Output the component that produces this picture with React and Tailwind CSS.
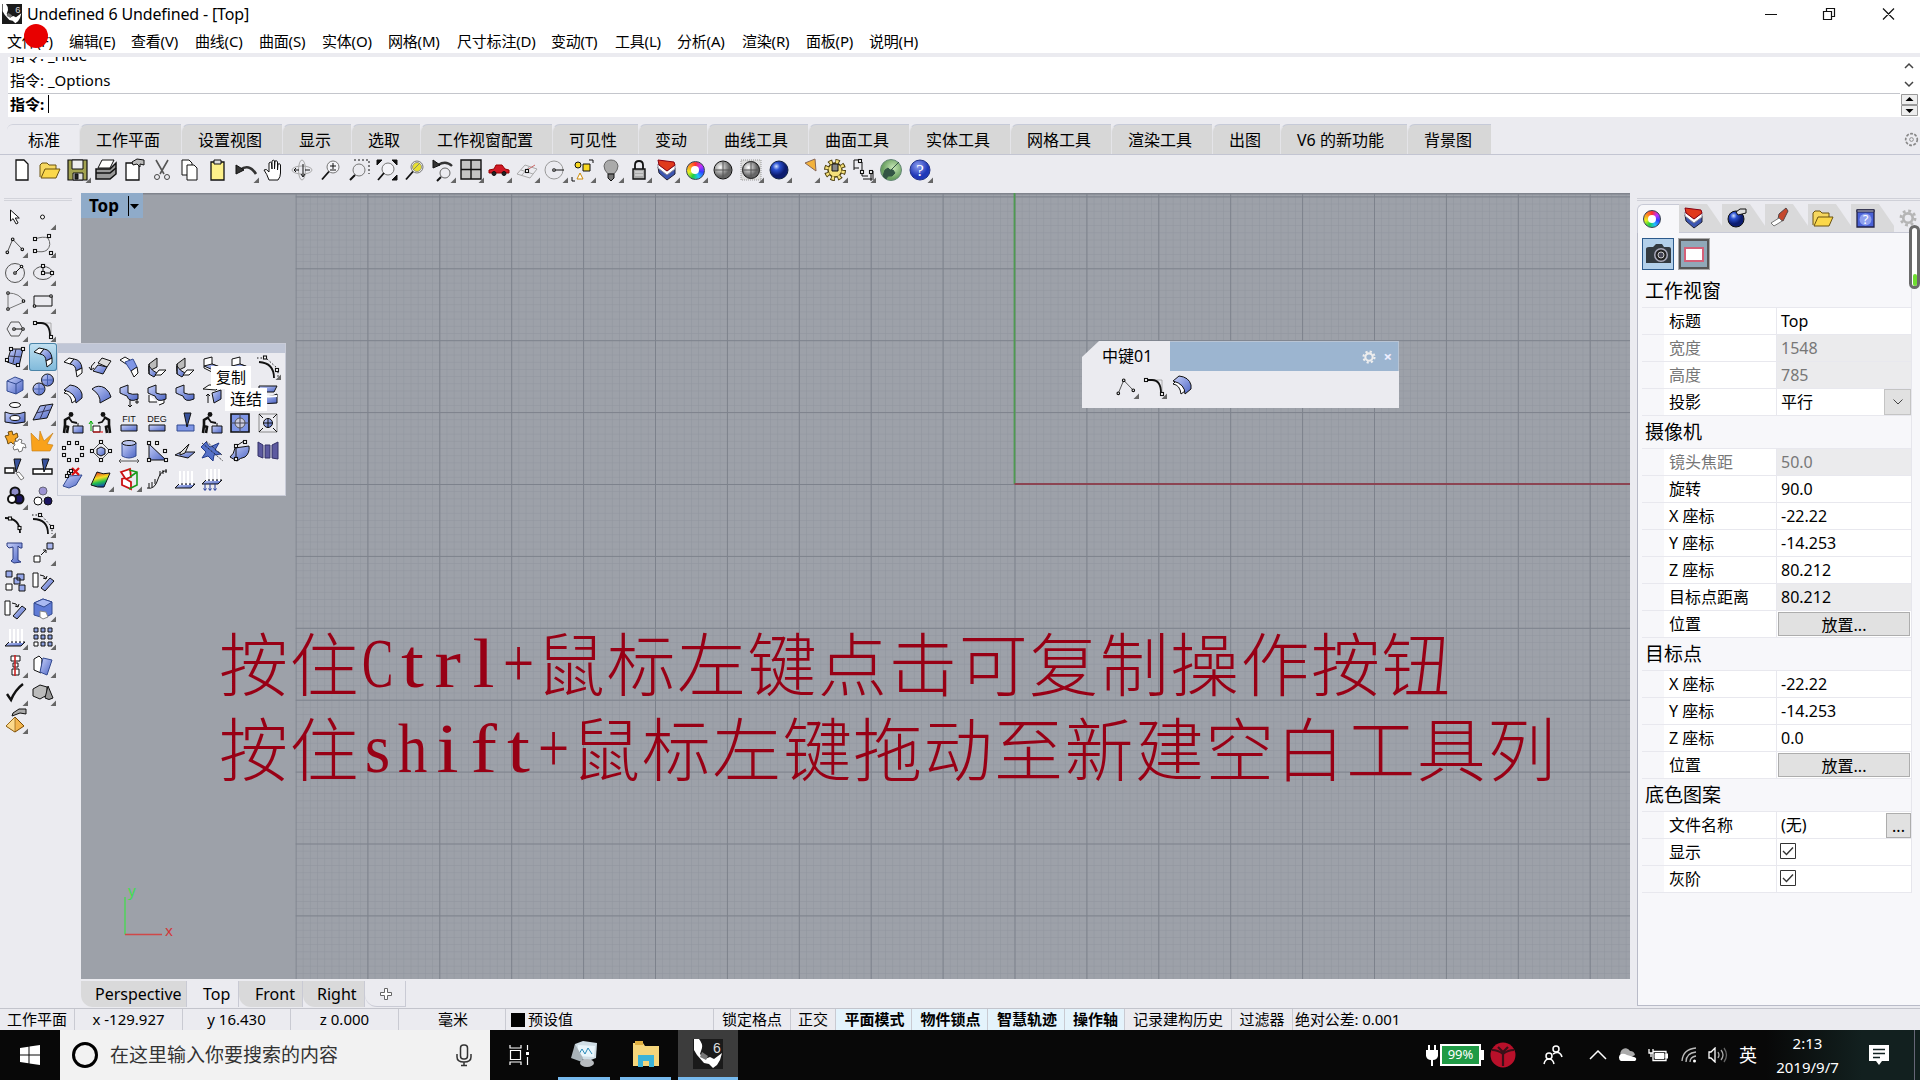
import clsx from "clsx";

const B = "url(#blue)";
const K = "#111";

// ── Icon primitives (28 x 28 cells) ──────────────────────────────
function Cell({ more, className, children }) {
  return (
    <svg viewBox="0 0 28 28" className={clsx("h-7 w-7 shrink-0", className)} fill="none" stroke={K} strokeWidth="1">
      {children}
      {more && <path d="M27 27V21.5L21.5 27Z" fill="#666" stroke="none" />}
    </svg>
  );
}

function Hs({ p }) {
  return p.map(([x, y]) => (
    <rect key={`${x}-${y}`} x={x - 1.5} y={y - 1.5} width="3" height="3" fill="#fff" stroke={K} strokeWidth="1.1" />
  ));
}

function Ds({ p }) {
  return p.map(([x, y]) => <circle key={`${x}-${y}`} cx={x} cy={y} r="1.3" fill="#fff" stroke={K} strokeWidth="1.1" />);
}

const Fillet = (
  <>
    <path d="M5 8h17v14" stroke="#999" strokeWidth=".8" />
    <path d="M7 8h5q9 0 9 13" strokeWidth="1.8" />
    <Hs p={[[6, 8], [22, 22]]} />
  </>
);
const Polyline = (
  <>
    <path d="M6.3 21.3L11.7 8.3L21.3 18.3" stroke="#555" />
    <Ds p={[[6.3, 21.3], [11.7, 8.3], [21.3, 18.3]]} />
  </>
);
const Bridge = (
  <>
    <path d="M5 9l5-4 5 1-4 5z" fill="#fff" />
    <path d="M11 11l4-5q7 1 8 9l-6 3q0-6-6-7z" fill={B} />
    <path d="M17 18l6-3v5l-5 4z" fill="#fff" />
  </>
);
const Flow = (
  <>
    <path d="M4 23h16l4-4H8z" fill={B} />
    <path d="M9 20V6M13 20V6M17 20V6M21 20V6" stroke="#fff" strokeWidth="2" />
  </>
);
const Rotated = (
  <>
    <path d="M4 6h5v14H4z" fill="#fff" />
    <path d="M12 21l9-10 4 3-9 10z" fill={B} />
    <path d="M11 8q5 0 6 4M17 12l-3-1M17 12l1-3" />
  </>
);
const Worker = (
  <>
    <circle cx="12" cy="5.5" r="2.4" fill={K} stroke="none" />
    <path d="M11 8L6 11v6l3 1-1 6M6 16l-1 8" strokeWidth="2.6" />
    <path d="M10 9l3 4 5 1" strokeWidth="1.8" />
    <path d="M14 17h10v7H14z" fill={B} />
    <path d="M19 17v-3" />
  </>
);
const Bend = <path d="M5 7l8-3v8q4 2 10 1v5q-9 4-11-3-3-1-7-3z" fill={B} />;

// ── Left tool palette ────────────────────────────────────────────
const SIDE = [
  [<path d="M9.500 7v11l2.600-2.400 3 5.400 2-1-2.800-5h4z" fill="#fff" />],
  [<circle cx="13.500" cy="14" r="2" fill="#fff" />, 1],
  [Polyline, 1],
  [<><path d="M6 8q8-3 13-1 4 7-1 12-4 3-12 1" stroke="#666" /><Hs p={[[6, 8], [20, 5], [6, 20], [22, 22]]} /></>, 1],
  [<><circle cx="14" cy="14" r="9.500" stroke="#555" /><path d="M14 14l6-6" /><Ds p={[[14, 14], [20.500, 7.500]]} /></>, 1],
  [<><ellipse cx="14" cy="14" rx="9.500" ry="6.500" stroke="#555" /><path d="M14 14h8M14 14V7" /><Hs p={[[14, 7], [14, 14], [23, 14]]} /></>, 1],
  [<><path d="M7 6q12 0 16 9L7 22z" stroke="#777" /><Ds p={[[7, 6], [22.500, 14], [7, 22]]} /></>, 1],
  [<><path d="M5 9h18v10H5z" /><Ds p={[[22, 9], [5.500, 19]]} /></>, 1],
  [<><path d="M6 14l4-7h8l4 7-4 7h-8z" stroke="#555" /><path d="M13 14h9" /><Ds p={[[13, 14], [22, 14]]} /></>, 1],
  [Fillet, 1],
  [<><path d="M10 6h12l-4 17-12-4z" fill={B} /><path d="M8 13l12 1M15 6l-3 14" stroke="#334" /><Hs p={[[10, 6], [22, 6], [6, 17], [17, 22]]} /></>, 1],
  [Bridge],
  [<><path d="M6 10l8-4 8 3v10l-7 4-9-3z" fill={B} stroke="#334a90" /><path d="M6 10l9 3 7-4M15 13v10" stroke="#334a90" /></>, 1],
  [<><circle cx="18.500" cy="9" r="6" fill={B} /><circle cx="10" cy="18" r="6" fill={B} /><path d="M4 18h12M10 12v12M12.500 9h12M18.500 3v12" stroke="#4560b0" /></>, 1],
  [<><ellipse cx="14" cy="6" rx="5.500" ry="2.500" fill="#fff" /><path d="M4 13q10 4 20 0v10q-10 3-20 0z" fill={B} /><ellipse cx="14" cy="19" rx="5" ry="2.500" fill="#fff" /></>, 1],
  [<><path d="M4 21l7-14 13-2-6 14z" fill={B} /><path d="M7 14l14-3M17 6l-6 14" stroke="#335" /></>, 1],
  [<><path d="M4 9l4-1-1-3 4-1 1 4 4-2 1 4-3 2 2 4-4 1-2-2-3 2-1-4z" fill="#f5a623" stroke="#6b4a10" /><path d="M13 15l4-1 1-2 3 1-1 3 4 1 1 4-3-1-1 4-3 1-1-3-4 1-1-3 2-2z" fill="#fff" stroke="#777" /></>],
  [<path d="M2 6l8 8 1-10 4 10 9-8-6 11 6 1-3 6H3z" fill="#f9a21b" stroke="#c07a14" strokeWidth=".6" />],
  [<><path d="M4 13h9v5H4z" fill="#fff" strokeWidth="1.400" /><path d="M13 4h7l-5 13z" fill="#38529c" /><path d="M15 18l3-1 5 6-3 2z" fill="#fff" stroke="#777" /></>],
  [<><path d="M4 14h19v5H4z" fill="#fff" strokeWidth="1.400" /><path d="M13 4h7l-5 13z" fill="#38529c" /></>],
  [<><circle cx="14" cy="9" r="4.500" fill="#8e8cc9" strokeWidth="2" /><circle cx="18" cy="16" r="4.500" fill="#1b1560" strokeWidth="2" /><circle cx="11" cy="16" r="4" fill="#fff" strokeWidth="2" /></>, 1],
  [<><circle cx="14" cy="8" r="4" fill="#9d94d4" stroke="#667" /><circle cx="9" cy="18" r="4" fill="#fff" /><circle cx="19" cy="18" r="4" fill="#1b1560" /></>],
  [<><path d="M4 7q15 0 15 15" strokeWidth="1.800" /><Hs p={[[9, 7.500], [18.500, 17]]} /></>],
  [<><path d="M4 8q15 0 15 15" strokeWidth="1.800" /><path d="M3 4h9l11 12v7" strokeDasharray="1.500 2" /><Hs p={[[11, 4], [23, 16]]} /></>, 1],
  [<path d="M6 4h15v5h-2l-2-2v14l3 2-7 1-3-2 2-2V8l-4 1-2-2z" fill={B} stroke="#2c3c80" />],
  [<><path d="M18 4h6v6h-6z" fill="#a9b6ee" /><path d="M5 17h6v6H5z" fill="#fff" /><path d="M12 16l5-5M17 11h-3M17 11v3" /></>, 1],
  [<><path d="M5 4h6v6H5zM16 7h7v6h-7zM13 11h6v6h-6zM18 18h6v6h-6z" fill="#97a8ea" /><path d="M5 17h6v6H5z" fill="#fff" /></>],
  [Rotated],
  [Rotated],
  [<><path d="M5 8l9-4 9 3v12l-8 4-10-3z" fill="#5f7bd6" stroke="#334a90" /><path d="M5 8l9-4 9 3-8 5z" fill="#a9b9f2" stroke="#334a90" /><path d="M11 16l6 1 2 5-5 2-3-2z" fill="#fff" stroke="#888" /></>, 1],
  [Flow, 1],
  [<><path d="M5 5h4v4H5zM12 5h4v4h-4zM19 5h4v4h-4zM5 12h4v4H5zM12 12h4v4h-4zM19 12h4v4h-4zM12 19h4v4h-4zM19 19h4v4h-4z" fill="#8da1e0" /><path d="M5 19h4v4H5z" fill="#fff" /></>, 1],
  [<><path d="M10 5h9v5h-9zM12 12h5v4h-5zM11 18h7v6h-7z" fill="#fff" /><path d="M14 4v21" stroke="#c22" strokeWidth="1.600" /></>, 1],
  [<><path d="M5 8l5-3 3 3-1 14-7-3z" fill="#fff" /><path d="M14 7l9 2-5 15-7-3z" fill={B} stroke="#334a90" /></>, 1],
  [<path d="M6 15l4 6Q14 11 22 5" strokeWidth="2.400" />, 1],
  [<><path d="M4 10l7-4 7 2v8l-7 4-7-3z" fill="#bbb" /><path d="M19 7l5 12q-4 3-8 0z" fill="#999" /></>, 1],
  [<><path d="M14 10l9 9-9 6-9-6z" fill="#f3b650" stroke="#7a4a00" /><path d="M14 10v15l-9-6z" fill="#fbd98c" stroke="#7a4a00" strokeWidth=".6" /><path d="M12 6l6-4h7v5l-6-1-8 3z" fill="#aaa" /></>, 1],
];

// ── Surface fly-out ──────────────────────────────────────────────
const label = (t) => (
  <>
    <text x="14" y="13" textAnchor="middle" fontSize="9" fill={K} stroke="none" fontFamily="Liberation Sans, sans-serif">{t}</text>
    <path d="M6 16h16v6H6z" fill={B} />
  </>
);
const Corner = (
  <>
    <path d="M6 11l8-6v9l-8 4z" fill="#bbb" />
    <path d="M6 13q3 5 8 7l-3 4-5-3z" fill={B} />
    <path d="M12 22l4-5 7 0-5 5z" fill="#fff" />
    <path d="M6 11v10" />
  </>
);
const Offset = (
  <>
    <path d="M5 12q7 1 8 10l4-3q-1-9-9-10z" fill="#fff" />
    <path d="M5 9l6-5q10 1 12 9v4l-6 5q0-10-12-13z" fill={B} />
  </>
);
const FLY = [
  [Bridge],
  [<><path d="M11 10l4-5 9 3-4 6z" fill="#ddd" /><path d="M6 18l5-6 9 2-4 7z" fill={B} /><path d="M8 9q-5 4-4 8M4 17l-2-3M4 17l3-2" /></>],
  [<><path d="M5 7l5-3 5 3-4 4z" fill="#fff" /><path d="M10 9l8-3 4 8-6 4z" fill="#7f96e6" stroke="#334a90" /><path d="M16 18l6-4 1 6-4 4z" fill="#fff" /></>],
  [Corner],
  [Corner],
  [<><path d="M6 6l8-2v7l8 3-6 6-10-5z" fill="#fff" /><path d="M6 13l8-2 8 3-7 3z" fill={B} /></>],
  [<><path d="M6 6l8-2v7l8 3-6 6-10-5z" fill="#fff" /><path d="M6 13l8-2 8 3-7 3z" fill={B} /></>],
  [<><path d="M5 9q15 1 15 16" strokeWidth="1.800" /><path d="M3 5h9l12 11v8" strokeDasharray="1.500 2" /><Hs p={[[11, 4.500], [23, 17]]} /></>, 1],
  [Offset],
  [<path d="M5 8q6-5 13-1 5 4 6 9l-11 6q1-8-8-14z" fill={B} />],
  [<>{Bend}<path d="M15 18v8M13 24l2 2 2-2M22 18v5M20 21h4" /></>],
  [<><path d="M6 14v7h8M15 19l6-3v6l-5 2" fill="#fff" />{Bend}</>],
  [Bend],
  [<><path d="M5 8l6-4h12l-5 5z" fill="#fff" /><path d="M14 12l9-3v9l-7 4z" fill={B} /><path d="M10 22v-9M8 15l2-2 2 2" /></>],
  [<path d="M5 8l6-4h12l-5 5z" fill={B} />],
  [<><path d="M5 5h18l-3 6H5z" fill={B} /><path d="M5 14q8 4 18-1v9q-10 2-18-2z" fill={B} /><path d="M8 16l15-1" stroke="#fff" strokeWidth="2" /></>],
  [Worker],
  [<><circle cx="16" cy="5.500" r="2.400" fill={K} stroke="none" /><path d="M17 8l5 3v6l-3 1 1 6M22 16l1 8" strokeWidth="2.600" /><path d="M18 9l-3 4-4 1" strokeWidth="1.800" /><path d="M6 17h7v6H6z" fill="#fff" /><path d="M4 22V12M4 12l-2 3M4 12l2 3" stroke="#0a0" /><path d="M6 23h10" stroke="#d00" /></>],
  [label("FIT")],
  [label("DEG")],
  [<><path d="M6 16h17v6H6z" fill="#7f96e6" stroke="#334a90" /><path d="M13 4h7l-4 14z" fill="#38529c" /></>],
  [Worker],
  [<><path d="M5 5h18v18H5z" fill="#7f96e6" strokeWidth="1.600" /><circle cx="14" cy="14" r="5" fill="#ccd" stroke="#555" /><path d="M14 5v18M5 14h18" stroke="#445" /></>],
  [<><path d="M5 5h18v18H5z" stroke="#888" /><circle cx="14" cy="14" r="4.500" fill={B} /><path d="M9 14h10M14 9v10M5 5l4 4M23 5l-4 4M5 23l4-4M23 23l-4-4" /></>],
  [<Hs p={[[10, 6], [18, 6], [5, 11], [23, 11], [5, 18], [23, 18], [10, 23], [18, 23]]} />],
  [<><path d="M14 5l9 9-9 9-9-9z" stroke="#555" /><path d="M10 12l4-2 4 2v5l-4 2-4-2z" fill={B} /><Hs p={[[14, 5], [23, 14], [14, 23], [5, 14]]} /></>],
  [<><path d="M7 6v13q7 4 14 0V6z" fill={B} stroke="#334a90" /><ellipse cx="14" cy="6" rx="7" ry="2.500" fill="#bcc6ee" /><path d="M4 24h20M6 22l-2 2 2 2M22 22l2 2-2 2" stroke="#555" /></>],
  [<><path d="M6 23V7l17 16z" fill={B} /><Hs p={[[6, 6], [14, 6], [6, 23], [23, 23], [22, 14]]} /></>],
  [<><path d="M4 18l6-3h14l-7 6z" fill={B} /><path d="M9 16l9-9-4 9-5 2z" fill="#ddd" /></>],
  [<><path d="M8 5l4 5 9-4-4 7 6 4-7 1-1 6-5-5-6 2 4-6-5-5z" fill="#5470c8" stroke="#223a8a" /><path d="M4 6l21 18M8 4l16 14" strokeDasharray="1 1" /></>],
  [<><path d="M4 20q4-3 5-9l14-2q1 7-4 11-5 1-8 4z" fill={B} /><path d="M10 22V9l8-5" /><Hs p={[[10, 9], [19, 5], [10, 22]]} /></>],
  [<path d="M4 5l5 3v13l-5-2zM11 8h5v13h-5zM18 8l6-3v17l-6-1z" fill="#5d5aa0" stroke="#333066" />],
  [<><path d="M4 21l6-10 13-1-6 10-7 3z" fill={B} stroke="#334a90" /><path d="M13 3l7 7M20 3l-7 7" stroke="#d11" strokeWidth="2.200" /><Hs p={[[8, 11], [10, 8], [12, 6]]} /></>],
  [<path d="M4 20l6-13q6 3 13 1l-6 14q-6 1-13-2z" fill="url(#rainbow)" />, 1],
  [<><path d="M6 7l9-3 1 8-5 2 5 3v7l-9-4v-6l3-1z" fill="#fff" stroke="#c11" strokeWidth="1.800" /><path d="M14 5l8 2v13l-8 4M15 12l7-5" stroke="#1a9a1a" strokeWidth="1.600" /></>, 1],
  [<path d="M4 23q8 2 11-9 3-9 9-8M6 18v5M9 17v5M12 14v5M17 6v5M20 5v4M23 4v4" />],
  [Flow],
  [<><path d="M4 19h16l4-4H8z" fill={B} /><path d="M9 16V4M13 16V4M17 16V4M21 16V4" stroke="#fff" strokeWidth="2" /><path d="M7 19v6M12 19v6M17 19v6M5.500 23.500l1.500 2 1.500-2M10.500 23.500l1.500 2 1.500-2M15.500 23.500l1.500 2 1.500-2" stroke="#223a9a" /></>],
];

// ── Standard toolbar ─────────────────────────────────────────────
const Page = <path d="M8 4h8l4 4v16H8z" fill="#fff" strokeWidth="1.300" />;
const Lens = <><circle cx="16" cy="11" r="6" fill="#f4f4f8" stroke="#777" /><path d="M12 15.500l-7 8" strokeWidth="1.800" /></>;
const Folder = <><path d="M4 21V9l2-2h5l2 2h7v4" fill="#f6d860" stroke="#6b5310" /><path d="M5 22l4-9h15l-4 9z" fill="#fbd84a" stroke="#6b5310" /></>;
const BAR = [
  [Page],
  [Folder],
  [<><path d="M4 4h19v20H4z" fill="#a3a350" strokeWidth="1.200" /><path d="M8 4h11v9H8z" fill="#eee" /><path d="M9 17h10v7H9z" fill="#ddd" /><path d="M11 18h3v5h-3z" fill="#222" /></>, 1],
  [<><path d="M10 4h12l-4 8H6z" fill="#fff" /><path d="M4 13h14l6-6v11l-6 5H4z" fill="#999" strokeWidth="1.500" /><path d="M4 17h14l6-5" strokeWidth="1.600" /></>],
  [<><path d="M6 7h13v17H6z" fill="#fff" strokeWidth="1.300" /><path d="M12 6l5-3 7 1v5l-4-1v3l-3-3-4 1z" fill="#bbb" /></>],
  [<><path d="M8 4l8 14M20 4l-8 14" stroke="#555" strokeWidth="1.600" /><circle cx="9" cy="21" r="2.500" stroke="#444" /><circle cx="19" cy="21" r="2.500" stroke="#444" /></>],
  [<><path d="M6 4h7l3 3v12H6z" fill="#fff" /><path d="M11 9h7l3 3v12H11z" fill="#fff" /></>],
  [<><path d="M7 6h13v18H7z" fill="#fdf08a" strokeWidth="1.300" /><path d="M10 4h7v4h-7z" fill="#ddd" /></>],
  [<><path d="M8 14q9-7 16 4" strokeWidth="2.600" stroke="#333" /><path d="M4 18V9l8 5z" fill="#333" /></>, 1],
  [<path d="M9 24q-2-6-5-10 2-2 5 2V7q2-2 2.500 0l.5 6V5q2-2 2.500 0v8l.500-8q2-1 2.500 1v8l.500-6q2-1 2.500 1v8q0 4-2.500 7z" fill="#fff" />],
  [<><ellipse cx="14" cy="14" rx="3.500" ry="10" stroke="#aaa" /><ellipse cx="14" cy="14" rx="10" ry="4" stroke="#aaa" /><path d="M15 8v12M13 18l2 3 2-3M6 14h5M17 14h5M8 12l-2 2 2 2" /></>],
  [<>{Lens}<path d="M13 10h6M16 7v6M13 14h6" /></>],
  [<><circle cx="14" cy="14" r="6" stroke="#777" /><path d="M10 19l-5 5" strokeWidth="2" /><path d="M9 4h15v14" strokeDasharray="2 2" /></>],
  [<><circle cx="15" cy="13" r="6" stroke="#777" fill="#f4f4f8" /><path d="M11 17l-6 7" strokeWidth="1.800" /><path d="M4 9V4h5zM19 4h5v5zM24 19v5h-5z" fill={K} /></>],
  [<>{Lens}<circle cx="16" cy="11" r="4.500" fill="#e8e030" stroke="#998" /><path d="M12 14l7-7" stroke="#886" /></>],
  [<><circle cx="16" cy="17" r="5" stroke="#666" /><path d="M12 21l-4 4" strokeWidth="2" /><path d="M9 9q8-5 14 1" strokeWidth="2.300" stroke="#333" /><path d="M4 12V4l7 5z" fill="#333" /></>, 1],
  [<><path d="M4 4h20v19H4z" fill="#c4c4c4" strokeWidth="1.400" /><path d="M14 4v19M4 13.500h20" strokeWidth="1.400" /></>, 1],
  [<><path d="M4 14l5-1 2-4h6l3 4 4 1v3H4z" fill="#d01825" stroke="#900" /><circle cx="9" cy="17.500" r="2" fill="#222" /><circle cx="19" cy="17.500" r="2" fill="#222" /></>, 1],
  [<><path d="M4 18l8-9 12 4-7 9z" stroke="#aaa" /><path d="M8 14l12 4M17 10l-9 10" stroke="#aaa" /><path d="M14 14l8-5" stroke="#c66" /><Hs p={[[14, 15]]} /></>, 1],
  [<><circle cx="13" cy="14" r="9" stroke="#999" /><path d="M13 14h10" /><Ds p={[[13, 14]]} /></>, 1],
  [<><circle cx="9" cy="9" r="3" fill="#f8d820" /><path d="M14 8h7v7h-7z" fill="#f8d820" /><path d="M11 17l3 6H8z" fill="#fff" stroke="#c80" /><path d="M20 4h4v3M3 21v4h3" /></>, 1],
  [<><path d="M11 18q-4-4-4-8 1-6 7-6t7 6q0 4-4 8z" fill="#aaa" stroke="#666" /><path d="M11 18h6v4l-3 3-3-3z" fill="#777" /></>, 1],
  [<><path d="M10 13V9q0-4 4-4t4 4v4" strokeWidth="1.800" /><path d="M8 13h12v10H8z" fill="#aaa" strokeWidth="1.400" /><path d="M10 16h8M10 19h8" stroke="#eee" /></>, 1],
  [<><path d="M5 11l9 7 8-6v6l-8 6-8-7z" fill="#3c55b0" stroke="#223" /><path d="M5 8l9 7 8-6v4l-8 6-9-7z" fill="#fff" stroke="#889" /><path d="M5 4l16 2 1 3-8 6-8-6z" fill="#e03a1c" stroke="#801" /></>, 1],
  ["wheel", 1],
  [<><circle cx="14" cy="14" r="9" fill="url(#grey)" /><path d="M14 5v18M5 14h18" stroke="#555" /></>],
  [<><path d="M4 4h20v20H4z" fill="#ddd" stroke="#999" strokeDasharray="1 1" /><circle cx="14" cy="14" r="8.500" fill="url(#grey)" /><path d="M14 5v18M5 14h18" stroke="#555" /></>, 1],
  [<circle cx="14" cy="14" r="9" fill="url(#ball)" stroke="#124" />, 1],
  [<path d="M12 7l10-4 1 12z" fill="#f3b23c" stroke="#865" />, 1],
  [<><circle cx="14" cy="14" r="8.500" strokeDasharray="4 2.700" strokeWidth="5" stroke="#4a3c08" /><circle cx="14" cy="14" r="7" fill="#f5e07a" stroke="#4a3c08" strokeWidth="1.400" /><circle cx="14" cy="14" r="8.300" strokeDasharray="2.400 4.120" strokeDashoffset="-.8" strokeWidth="3.400" stroke="#f5e07a" /><path d="M11 8h6v7h-6z" fill="#888" /></>, 1],
  [<><path d="M5 4h5M5 12h5M5 4v10M13 6v14h6M14 23h9M22 15v10M24 15v9" /><Hs p={[[11, 5], [13, 16], [22, 16]]} /></>, 1],
  [<><circle cx="14" cy="14" r="10.500" fill="url(#green)" stroke="#687" /><path d="M6 20l2-6 3-2 2 2h3l2 3-3 3h-4l-2 3zM14 14l8-8" fill="#354" stroke="#354" /></>],
  [<><circle cx="14" cy="14" r="10" fill="url(#ask)" stroke="#238" /><text x="14" y="20" textAnchor="middle" fontSize="17" fill="#fff" stroke="none" fontFamily="Liberation Serif, serif">?</text></>, 1],
];

function Wheel({ className }) {
  return (
    <div className={clsx("flex items-center justify-center rounded-full border border-gray-700 bg-[conic-gradient(#ff3030,#c030ff,#3040ff,#20c0ff,#20d040,#e8f020,#ff9020,#ff3030)]", className)}>
      <div className="h-[8px] w-[8px] rounded-full bg-white" />
    </div>
  );
}

function Gear({ className, fill = "#b5b5b5" }) {
  return (
    <svg viewBox="0 0 16 16" className={className} fill="none">
      <circle cx="8" cy="8" r="6.300" stroke={fill} strokeWidth="2.400" strokeDasharray="2.500 2.450" />
      <circle cx="8" cy="8" r="4.200" stroke={fill} strokeWidth="2.400" />
    </svg>
  );
}

function Rhino({ className }) {
  return (
    <svg viewBox="0 0 30 30" className={className}>
      <path d="M0 0h30v30H0z" fill="#1a1a1a" />
      <path d="M1 0h5q4 5 3 9l-2 6 5 5 5-2 4 2 8-6-2 7-3 5-4 3-4-4-5-1-7-8-3-5z" fill="#fff" />
      <path d="M9 13l6 4-2 4-6-3z" fill="#777" />
      <text x="20" y="14" fontSize="14" fill="#ddd" fontFamily="Liberation Sans, sans-serif">6</text>
    </svg>
  );
}

// ── Data ─────────────────────────────────────────────────────────
const MENU = [
  ["文件(F)", "w-[62px]"], ["编辑(E)", "w-[62px]"], ["查看(V)", "w-[64px]"], ["曲线(C)", "w-[64px]"],
  ["曲面(S)", "w-[63px]"], ["实体(O)", "w-[66px]"], ["网格(M)", "w-[69px]"], ["尺寸标注(D)", "w-[94px]"],
  ["变动(T)", "w-[64px]"], ["工具(L)", "w-[62px]"], ["分析(A)", "w-[65px]"], ["渲染(R)", "w-[64px]"],
  ["面板(P)", "w-[63px]"], ["说明(H)", "w-[63px]"],
];

const TABS = [
  ["工作平面", "w-[102px]"], ["设置视图", "w-[101px]"], ["显示", "w-[69px]"], ["选取", "w-[69px]"],
  ["工作视窗配置", "w-[132px]"], ["可见性", "w-[86px]"], ["变动", "w-[69px]"], ["曲线工具", "w-[101px]"],
  ["曲面工具", "w-[101px]"], ["实体工具", "w-[101px]"], ["网格工具", "w-[101px]"], ["渲染工具", "w-[101px]"],
  ["出图", "w-[68px]"], ["V6 的新功能", "w-[127px]"], ["背景图", "w-[84px]"],
];

const PROPS = [
  { title: "工作视窗", rows: [["标题", "Top"], ["宽度", "1548", "off"], ["高度", "785", "off"], ["投影", "平行", "select"]] },
  {
    title: "摄像机",
    rows: [["镜头焦距", "50.0", "off"], ["旋转", "90.0"], ["X 座标", "-22.22"], ["Y 座标", "-14.253"], ["Z 座标", "80.212"], ["目标点距离", "80.212", "ro"], ["位置", "放置...", "button"]],
  },
  { title: "目标点", rows: [["X 座标", "-22.22"], ["Y 座标", "-14.253"], ["Z 座标", "0.0"], ["位置", "放置...", "button"]] },
  { title: "底色图案", rows: [["文件名称", "(无)", "file"], ["显示", "", "check"], ["灰阶", "", "check"]] },
];

const STATUS = [
  ["工作平面", "w-[75px] justify-center"],
  ["x -129.927", "w-[108px] justify-center"],
  ["y 16.430", "w-[108px] justify-center"],
  ["z 0.000", "w-[108px] justify-center"],
  ["毫米", "w-[107px] justify-center pl-[2px]"],
  ["预设值", "w-[208px] pl-[5px]", "swatch"],
  ["锁定格点", "w-[77px] justify-center"],
  ["正交", "w-[45px] justify-center"],
  ["平面模式", "w-[76px] justify-center bg-[#e4f3fc] pl-[2px] font-bold"],
  ["物件锁点", "w-[76px] justify-center bg-[#e4f3fc] pl-[2px] font-bold"],
  ["智慧轨迹", "w-[77px] justify-center bg-[#e4f3fc] pl-[2px] font-bold"],
  ["操作轴", "w-[60px] justify-center bg-[#e4f3fc] pl-[2px] font-bold"],
  ["记录建构历史", "w-[107px] justify-center"],
  ["过滤器", "w-[61px] justify-center"],
];

const CAPTION = ["按住Ctrl+鼠标左键点击可复制操作按钮", "按住shift+鼠标左键拖动至新建空白工具列"];

// half-width letters are stretched to an even monospaced set
const STRETCH = {
  C: "scale-x-[.68]", t: "scale-x-[1.2]", r: "scale-x-[1.15]", l: "scale-x-[1.15]", i: "scale-x-[1.15]",
  f: "scale-x-[1.15]", h: "scale-x-[.85]", s: "scale-x-[.95]", "+": "scale-x-[.8]",
};

// ── Sections ─────────────────────────────────────────────────────
function Header() {
  return (
    <header className="bg-white">
      <div className="flex h-7 items-center pl-[2px]">
        <Rhino className="h-5 w-5" />
        <span className="ml-[5px] text-[16px] tracking-[-0.150px]">Undefined 6 Undefined - [Top]</span>
        <svg viewBox="0 0 160 28" className="mr-[9px] ml-auto h-7 w-[160px]" fill="none" stroke="#111" strokeWidth="1.200">
          <path d="M14 14.500h12M72.500 11.500h8v8h-8zM75.500 11v-2.500h8v8H81M132 8.500l11 11M143 8.500l-11 11" />
        </svg>
      </div>
      <nav className="relative flex h-[25px] items-start pt-[2px] pl-[7px] text-[15px] tracking-[-0.200px]">
        {MENU.map(([t, w]) => (
          <span key={t} className={clsx("shrink-0 whitespace-nowrap", w)}>{t}</span>
        ))}
        <span className="absolute top-[-4px] left-[24px] h-6 w-6 rounded-full bg-[#e80000]" />
      </nav>
    </header>
  );
}

function CommandLine() {
  return (
    <div className="flex h-[67px] border-t-4 border-b-[3px] border-[#ebebf0] bg-[#ebebf0] pl-2 text-[15px]">
      <div className="flex flex-1 flex-col overflow-hidden bg-white">
        <div className="flex h-[37px] flex-col justify-end overflow-hidden border-b border-[#c4c6cc] leading-[25px]">
          <p className="pl-[2px]">指令: _Hide</p>
          <p className="pl-[2px]">指令: _Options</p>
        </div>
        <div className="flex h-[20px] items-center pl-[2px]">
          <b>指令:</b>
          <span className="ml-[4px] h-[18px] w-px bg-black" />
        </div>
      </div>
      <svg viewBox="0 0 20 60" className="h-[60px] w-5 bg-white" fill="none" stroke="#444" strokeWidth="1.500">
        <path d="M5 11l4-4 4 4M5 25l4 4 4-4" />
        <path d="M1.500 37.500h16v10h-16zM1.500 48.500h16v10h-16z" fill="#eee" stroke="#999" strokeWidth="1" />
        <path d="M5.500 44l4-4 4 4zM5.500 52l4 4 4-4z" fill="#000" stroke="none" />
      </svg>
    </div>
  );
}

function TabStrip() {
  return (
    <div className="flex h-[35px] items-end border-b border-[#c3c5d2] pl-[7px] text-[16px]">
      <div className="flex h-[30px] w-[72px] items-center rounded-tl-md border-t border-[#d0d2dc] pl-[21px]">标准</div>
      {TABS.map(([t, w]) => (
        <div key={t} className={clsx("flex h-[30px] shrink-0 items-center rounded-tl-lg border-t border-l border-[#c6cad8] border-l-[#e4e4e8] bg-[#d7d7d7] pl-[16px] whitespace-nowrap", w)}>
          {t}
        </div>
      ))}
      <svg viewBox="0 0 16 16" className="mr-[1px] mb-[7px] ml-auto h-[15px] w-[15px]" fill="none" stroke="#888">
        <circle cx="8" cy="8" r="6.200" strokeWidth="1.800" strokeDasharray="3 1.500" />
        <circle cx="8" cy="8" r="2" />
      </svg>
    </div>
  );
}

function Toolbar() {
  return (
    <div className="flex h-[38px] items-start pt-[1px] pl-2">
      {BAR.map(([icon, more], i) => (
        <div key={i} className="flex h-7 w-[28.050px] shrink-0 justify-center">
          {icon === "wheel" ? (
            <div className="relative flex h-7 w-7 items-center justify-center">
              <Wheel className="h-[19px] w-[19px]" />
              <Cell more className="absolute inset-0" />
            </div>
          ) : (
            <Cell more={more}>{icon}</Cell>
          )}
        </div>
      ))}
    </div>
  );
}

function Palette() {
  return (
    <aside className="w-[81px] shrink-0 pt-[5px] pl-px">
      <div className="ml-[3px] h-[3px] w-[68px] border-y border-[#d2d3da]" />
      <div className="mt-[2px] grid w-14 grid-cols-2">
        {SIDE.map(([icon, more], i) => (
          <div key={i} className={clsx("h-7 w-7", i === 11 && "rounded-[3px] bg-[linear-gradient(#c4e2f2,#7fb9da)] ring-1 ring-[#4a84a8] ring-inset")}>
            <Cell more={more}>{icon}</Cell>
          </div>
        ))}
      </div>
    </aside>
  );
}

function Flyout() {
  return (
    <div className="absolute top-[343px] left-[57px] h-[153px] w-[229px] border border-[#c9ccd8] bg-[#ebebf0]">
      <div className="h-[9px] bg-[#c0c6d6]" />
      <div className="grid w-[224px] grid-cols-8 pl-px">
        {FLY.map(([icon, more], i) => (
          <Cell key={i} more={more}>{icon}</Cell>
        ))}
      </div>
      <span className="absolute top-[22px] left-[153px] bg-white px-[5px] text-[15px] leading-[23px]">复制</span>
      <span className="absolute top-[44px] left-[167px] bg-white px-[5px] text-[16px] leading-[23px]">连结</span>
    </div>
  );
}

function FloatingBar() {
  return (
    <div className="absolute top-[148px] left-[1001px] flex h-[67px] w-[317px] flex-col bg-[#ebebf0] [clip-path:polygon(17px_0,100%_0,100%_100%,0_100%,0_16px)]">
      <div className="flex h-[30px]">
        <div className="w-[88px] pt-[3px] pl-[20px] text-[16px]">中键01</div>
        <div className="flex flex-1 items-center justify-end border-t border-r border-[#b8c4d4] bg-[#9cb5d0] pr-[6px]">
          <Gear className="h-[14px] w-[14px]" fill="#eee" />
          <span className="ml-[7px] text-[15px] font-bold text-[#eef]">×</span>
        </div>
      </div>
      <div className="flex pt-[1px] pl-[30px]">
        <Cell more>{Polyline}</Cell>
        <Cell more>{Fillet}</Cell>
        <Cell>{Offset}</Cell>
      </div>
    </div>
  );
}

function Caption({ text }) {
  return (
    <p className="flex h-[85px] items-center text-[69px] leading-none font-light">
      {[...text].map((c, i) =>
        STRETCH[c] ? (
          <span key={i} className={clsx("flex w-[35.250px] justify-center font-['Liberation_Serif',serif]", STRETCH[c])}>{c}</span>
        ) : (
          <span key={i} className="w-[70.450px]">{c}</span>
        )
      )}
    </p>
  );
}

function Viewport() {
  return (
    <div className="relative h-[786px] w-[1549px] overflow-hidden bg-[#9da1a9]">
      <svg viewBox="1 0 1549 786" className="absolute inset-0 h-full w-full" fill="none">
        <defs>
          <pattern id="minor" x="215.500" y="3.400" width="7.190" height="7.190" patternUnits="userSpaceOnUse">
            <path d="M0 0H7.190M0 0V7.190" stroke="#8f949d" strokeWidth="1" />
          </pattern>
          <pattern id="major" x="215.500" y="3.400" width="71.900" height="71.900" patternUnits="userSpaceOnUse">
            <path d="M0 0H71.900M0 0V71.900" stroke="#7d828c" strokeWidth="2" />
          </pattern>
        </defs>
        <path d="M215.500 0H1550V786H215.500Z" fill="url(#minor)" />
        <path d="M215.500 0H1550V786H215.500Z" fill="url(#major)" />
        <path d="M0 .500H1550" stroke="#80848d" strokeWidth="2" />
        <path d="M934.500 0V291" stroke="#4e9a50" strokeWidth="1.800" />
        <path d="M934.500 291H1550" stroke="#8c4452" strokeWidth="1.800" />
        <path d="M45 741.500V704" stroke="#55d060" strokeWidth="1.600" />
        <path d="M45 741.500H82" stroke="#d04848" strokeWidth="1.600" />
      </svg>
      <span className="absolute top-[686px] left-[47px] text-[15px] text-[#3fdc50]">y</span>
      <span className="absolute top-[726px] left-[84px] text-[15px] text-[#d03838]">x</span>
      <div className="absolute top-0 left-0 flex h-[25px] w-[62px] items-center bg-[#8fabc9] pl-[8px] text-[17px] font-bold">
        Top
        <svg viewBox="0 0 16 22" className="ml-auto h-[22px] w-4"><path d="M1.500 1V21" stroke="#000" /><path d="M3 9h9l-4.500 5z" /></svg>
      </div>
      <FloatingBar />
      <div className="absolute top-[429px] left-[138px] text-[#980015]">
        {CAPTION.map((t) => <Caption key={t} text={t} />)}
      </div>
    </div>
  );
}

function ViewTabs() {
  const tabs = [["Perspective", "w-[106px] pl-[14px] bg-[#d9d9da]"], ["Top", "w-[52px] pl-[16px]"], ["Front", "w-[64px] pl-[16px] bg-[#d9d9da]"], ["Right", "w-[62px] pl-[14px] bg-[#d9d9da]"]];
  return (
    <div className="flex h-[29px] items-start pt-[2px]">
      {tabs.map(([t, cls]) => (
        <div key={t} className={clsx("flex h-[26px] items-center rounded-bl-xl border-r border-[#c9cad4] text-[16px]", cls)}>{t}</div>
      ))}
      <div className="flex h-[26px] w-[41px] items-center justify-center rounded-bl-xl border-r border-b border-[#c9cad4] pl-[2px]">
        <svg viewBox="0 0 12 12" className="h-3 w-3" fill="#fff" stroke="#666"><path d="M4.500.500h3v4h4v3h-4v4h-3v-4h-4v-3h4z" /></svg>
      </div>
    </div>
  );
}

function PropValue({ value, kind }) {
  if (kind === "button") {
    return <button className="mx-px my-px flex-1 border border-[#adadad] bg-[#e1e1e1] text-center">{value}</button>;
  }
  if (kind === "check") {
    return (
      <svg viewBox="0 0 16 16" className="mt-[4px] ml-[3px] h-4 w-4" fill="#fff" stroke="#333"><path d="M.500.500h15v15H.500z" /><path d="M3 8l3.500 3.500L13 4.500" fill="none" strokeWidth="1.400" /></svg>
    );
  }
  return (
    <div className={clsx("flex flex-1 items-center pl-[4px]", (kind === "off" || kind === "ro") && "bg-[#ebebed]", kind === "off" && "text-[#777]")}>
      {value}
      {kind === "select" && (
        <div className="ml-auto flex h-full w-[27px] items-center justify-center border border-[#c4c4c4] bg-[#e1e1e1]">
          <svg viewBox="0 0 12 8" className="h-2 w-3" fill="none" stroke="#444"><path d="M1.500 1.500l4.500 4.500 4.500-4.500" /></svg>
        </div>
      )}
      {kind === "file" && <div className="ml-auto flex h-[25px] w-[25px] justify-center border border-[#adadad] bg-[#e1e1e1]">...</div>}
    </div>
  );
}

const PANEL_ICONS = [
  <Cell key="layer">{BAR[23][0]}</Cell>,
  <Cell key="ball"><circle cx="13" cy="15" r="8" fill="url(#ball)" /><path d="M13 8l4-3h6v4l-4 1-4 1z" fill="#ddd" /></Cell>,
  <Cell key="brush"><path d="M13 10l7-6 2 3-5 10-5-2z" fill="#c5472c" stroke="#544" /><path d="M5 19l8-5 3 3-3 2-5 3z" fill="#fff" stroke="#777" /></Cell>,
  <Cell key="folder">{Folder}</Cell>,
  <Cell key="help"><path d="M5 6h17v17H5z" fill="#4a62d8" strokeWidth="1.300" stroke="#224" /><path d="M5 6h17v2H5z" fill="#ccd" stroke="#224" /><circle cx="13.500" cy="15.500" r="6" fill="#8fa0ee" stroke="none" /><text x="13.500" y="20" textAnchor="middle" fontSize="13" fill="#fff" stroke="none">?</text></Cell>,
];

function Panel() {
  return (
    <aside className="flex-1 pt-[5px] pl-[7px]">
      <div className="h-[3px] border-y border-[#cfd0d8]" />
      <div className="mt-[3px] flex h-[29px]">
        <div className="flex w-[42px] items-center rounded-tl-md border-t border-l border-[#c8cad6] bg-[#f7f7fa] pl-[5px]"><Wheel className="h-[18px] w-[18px]" /></div>
        {PANEL_ICONS.map((icon, i) => (
          <div key={i} className="flex w-[43px] shrink-0 items-center border-b border-[#c8cad6] bg-[#d9d9da] pl-px [clip-path:polygon(0_0,65%_0,100%_75%,100%_100%,0_100%)]">{icon}</div>
        ))}
        <div className="flex flex-1 items-center border-b border-[#c8cad6] pl-[5px]"><Gear className="h-[18px] w-[18px] shrink-0" /></div>
      </div>
      <div className="h-[773px] border-b border-l border-[#b9bbc8] bg-[#f7f7fa] pt-[5px] pl-[4px]">
        <div className="flex h-[37px] gap-1">
          <div className="h-8 w-8 border border-[#2c5a8c] bg-[#b3d0ea]">
            <svg viewBox="0 0 30 30" className="h-[30px] w-[30px]"><path d="M3 10q0-2 3-2h4l3-3h6l2 3h5q2 0 2 2v14H3z" fill="#333a40" /><circle cx="18" cy="16" r="7" fill="#aab" /><circle cx="18" cy="16" r="5.500" fill="#222" /><circle cx="18" cy="16" r="3" stroke="#ccc" fill="#445" /></svg>
          </div>
          <div className="h-8 w-8 border border-[#aaa] bg-[#555] p-[2px]">
            <div className="flex h-full w-full items-center justify-center bg-[#90a8b8]">
              <div className="h-[15px] w-5 border-2 border-[#d46078] bg-white" />
            </div>
          </div>
        </div>
        <div className="w-[270px] border-r border-[#e6e6ec] text-[16px]">
          {PROPS.map(({ title, rows }) => (
            <section key={title}>
              <h3 className="flex h-[33px] items-center border-b border-[#e8e8ee] pl-[3px] text-[19px]">{title}</h3>
              {rows.map(([name, value, kind], i) => (
                <div key={i} className="flex h-[27px] border-b border-[#e8e8ee] pl-[22px]">
                  <div className={clsx("flex w-[113px] items-center border-r border-[#e8e8ee] bg-white pl-[5px]", kind === "off" && "text-[#777]")}>{name}</div>
                  <div className="flex flex-1 bg-white">
                    <PropValue value={value} kind={kind} />
                  </div>
                </div>
              ))}
            </section>
          ))}
        </div>
      </div>
    </aside>
  );
}

function StatusBar() {
  return (
    <div className="flex h-[22px] border-t border-[#c3c4cc] text-[15px]">
      {STATUS.map(([t, cls, extra]) => (
        <div key={t} className={clsx("flex shrink-0 items-center border-r border-[#c9cad2] whitespace-nowrap", cls)}>
          {extra && <span className="mr-[3px] h-[14px] w-[14px] bg-black" />}
          {t}
        </div>
      ))}
      <span className="pl-[2px] leading-[21px] tracking-[-0.100px]">绝对公差: 0.001</span>
    </div>
  );
}

function Taskbar() {
  return (
    <footer className="flex h-[50px] items-stretch bg-[linear-gradient(90deg,#080808_92%,#12201f_97%)] text-white">
      <div className="flex w-[60px] items-center justify-center">
        <svg viewBox="0 0 20 20" className="h-5 w-5" fill="#fff"><path d="M0 3l8.500-1.200V9.500H0zM9.500 1.600L20 0v9.500H9.500zM0 10.500h8.500v7.700L0 17zM9.500 10.500H20V20L9.500 18.400z" /></svg>
      </div>
      <div className="flex w-[430px] items-center bg-[#f2f2f2] pl-[12px] text-[#333]">
        <span className="h-[26px] w-[26px] rounded-full border-[3.500px] border-black" />
        <span className="ml-[12px] text-[19px]">在这里输入你要搜索的内容</span>
        <svg viewBox="0 0 18 24" className="mr-[17px] ml-auto h-6 w-[18px]" fill="none" stroke="#333" strokeWidth="1.500"><rect x="5.500" y="2" width="7" height="14" rx="3" /><path d="M2 11v3q0 5 7 5t7-5v-3M9 19v4M6 22.500h6" /></svg>
      </div>
      <div className="flex w-[58px] items-center justify-center">
        <svg viewBox="0 0 22 20" className="h-5 w-[22px]" fill="none" stroke="#fff" strokeWidth="1.200"><path d="M2 0v3h11V0M2.500 5.500h10v9h-10zM2 20v-3h11v3M19.500 0v5M19.500 12v8" /><path d="M18 7h3v3h-3z" fill="#fff" stroke="none" /></svg>
      </div>
      <div className="flex w-[72px] items-center justify-center">
        <div className="mx-[10px] flex h-full flex-1 items-center justify-center border-b-[3px] border-[#76b9ed]">
          <svg viewBox="0 0 30 28" className="h-7 w-[30px]"><path d="M6 4l8-3 14 2-1 15-8 3-14-4z" fill="#cfdde5" /><path d="M9 5l17 1-1 11-17-1z" fill="#e9f5fb" /><path d="M10 14l3-5 3 5 3-6 4 6" stroke="#2a8ab8" fill="none" /><path d="M6 4L2 18l11 4 1-4z" fill="#a8b2b8" /><ellipse cx="18" cy="23" rx="7" ry="4" fill="#b8bcc0" /></svg>
        </div>
      </div>
      <div className="flex w-[51px] items-center justify-center border-b-[3px] border-[#76b9ed]">
        <svg viewBox="0 0 28 26" className="h-[26px] w-7"><path d="M1 2h10l2 3h14v20H1z" fill="#f5d67b" /><path d="M3 0h8v4H3z" fill="#e0b040" /><path d="M6 26V14h16v12h-5v-6h-6v6z" fill="#3bb3d8" /></svg>
      </div>
      <div className="ml-[7px] flex w-[60px] items-center justify-center border-b-[3px] border-[#76b9ed] bg-[#3c3c3c]">
        <Rhino className="h-[30px] w-[30px]" />
      </div>
      <div className="ml-auto flex items-center">
        <svg viewBox="0 0 12 24" className="h-6 w-3" fill="#fff"><path d="M2 2h2v5h4V2h2v5h2v6q-1 4-5 4v6H5v-6q-4 0-5-4V7h2z" /></svg>
        <span className="ml-[2px] flex h-[22px] w-[41px] items-center justify-center border-2 border-white bg-[#1f9a45] text-[13px]">99%</span>
        <span className="h-[10px] w-[3px] bg-white" />
        <svg viewBox="0 0 26 26" className="ml-[6px] h-[26px] w-[26px]"><circle cx="13" cy="13" r="12.500" fill="#b8102a" /><path d="M2 8q6 0 11 4 5-4 11-4M8 5l5 5 5-5M13 11v13" stroke="#3a1018" strokeWidth="2.200" fill="none" /></svg>
        <svg viewBox="0 0 20 20" className="ml-[27px] h-5 w-5" fill="none" stroke="#fff" strokeWidth="1.500"><circle cx="13" cy="4" r="3" /><circle cx="6" cy="11" r="3" /><path d="M1 19q1-5 5-5t5 5M10 9q7-4 9 3" /></svg>
        <svg viewBox="0 0 18 10" className="ml-[26px] h-[10px] w-[18px]" fill="none" stroke="#fff" strokeWidth="1.500"><path d="M1 9l8-8 8 8" /></svg>
        <svg viewBox="0 0 20 14" className="ml-[10px] h-[14px] w-5"><path d="M4 8a5 5 0 019-5 5 5 0 015 4l-8 4z" fill="#aaa" /><path d="M4 13a4 4 0 010-7q3-1 6 1l7 2q3 1 2 3l-1 1z" fill="#fff" /></svg>
        <svg viewBox="0 0 20 14" className="ml-[11px] h-[14px] w-5" fill="none" stroke="#fff"><path d="M5 3.500h13v9H5zM1 1v4h4V1M3 5v4" strokeWidth="1.300" /><path d="M7 5.500h9v5H7zM18 6h2v4h-2z" fill="#fff" /></svg>
        <svg viewBox="0 0 16 16" className="ml-[13px] h-4 w-4" fill="none" stroke="#bbb" strokeWidth="1.300"><path d="M1 14Q2 2 15 1M5 15q0-9 10-10M9 15q0-5 6-6" /><circle cx="13.500" cy="14" r="1.500" fill="#fff" stroke="none" /></svg>
        <svg viewBox="0 0 20 16" className="ml-[11px] h-4 w-5" fill="none" stroke="#fff" strokeWidth="1.300"><path d="M1 5h2l4-4v14l-4-4H1z" /><path d="M10 5q2 3 0 6M13 3q4 5 0 10" stroke="#aaa" /><path d="M16 1q5 7 0 14" stroke="#666" /></svg>
        <span className="ml-[11px] text-[18px]">英</span>
        <div className="ml-[17px] w-[67px] text-center text-[15px] leading-[24px] whitespace-nowrap">2:13<br />2019/9/7</div>
        <svg viewBox="0 0 20 20" className="mr-[25px] ml-[28px] h-5 w-5"><path d="M0 0h20v16h-7l-3 4-3-4H0z" fill="#fff" /><path d="M4 4.500h12M4 8.500h12M4 12.500h7" stroke="#122" strokeWidth="1.300" /></svg>
        <span className="mr-[5px] h-[50px] w-px bg-[#667]" />
      </div>
    </footer>
  );
}

export default function App() {
  return (
    <div className="relative flex h-[1080px] w-[1920px] flex-col overflow-hidden bg-[#ebebf0] font-['Noto_Sans','Noto_Sans_CJK_SC',sans-serif] leading-normal text-black">
      <svg className="absolute h-0 w-0">
        <defs>
          <linearGradient id="blue" x1="0" y1="0" x2="1" y2="1"><stop offset="0" stopColor="#c9d2fa" /><stop offset="1" stopColor="#4b64c4" /></linearGradient>
          <linearGradient id="rainbow" gradientUnits="userSpaceOnUse" x1="11" y1="6" x2="15" y2="23"><stop offset="0" stopColor="#e02020" /><stop offset="0.400" stopColor="#f5e020" /><stop offset="0.650" stopColor="#20c050" /><stop offset="1" stopColor="#1020d0" /></linearGradient>
          <radialGradient id="grey" cx="0.350" cy="0.350"><stop offset="0" stopColor="#fff" /><stop offset="1" stopColor="#666" /></radialGradient>
          <radialGradient id="ball" cx="0.350" cy="0.300"><stop offset="0" stopColor="#cfe0ff" /><stop offset="0.400" stopColor="#2a50d0" /><stop offset="1" stopColor="#0c1c70" /></radialGradient>
          <radialGradient id="green" cx="0.600" cy="0.400"><stop offset="0" stopColor="#c8e8b8" /><stop offset="1" stopColor="#6aa060" /></radialGradient>
          <radialGradient id="ask" cx="0.400" cy="0.300"><stop offset="0" stopColor="#8fa0f0" /><stop offset="1" stopColor="#2038b8" /></radialGradient>
        </defs>
      </svg>
      <Header />
      <CommandLine />
      <TabStrip />
      <Toolbar />
      <main className="flex h-[815px]">
        <Palette />
        <div className="w-[1549px] shrink-0">
          <Viewport />
          <ViewTabs />
        </div>
        <Panel />
      </main>
      <StatusBar />
      <Taskbar />
      <Flyout />
      {/* recorder level meter */}
      <div className="absolute top-[225px] left-[1909px] flex h-[64px] w-[11px] items-end justify-center rounded-full border-[3px] border-[#6a6a6a] bg-white">
        <span className="h-[12px] w-[4px] rounded-sm bg-[#6fdc30]" />
      </div>
    </div>
  );
}
